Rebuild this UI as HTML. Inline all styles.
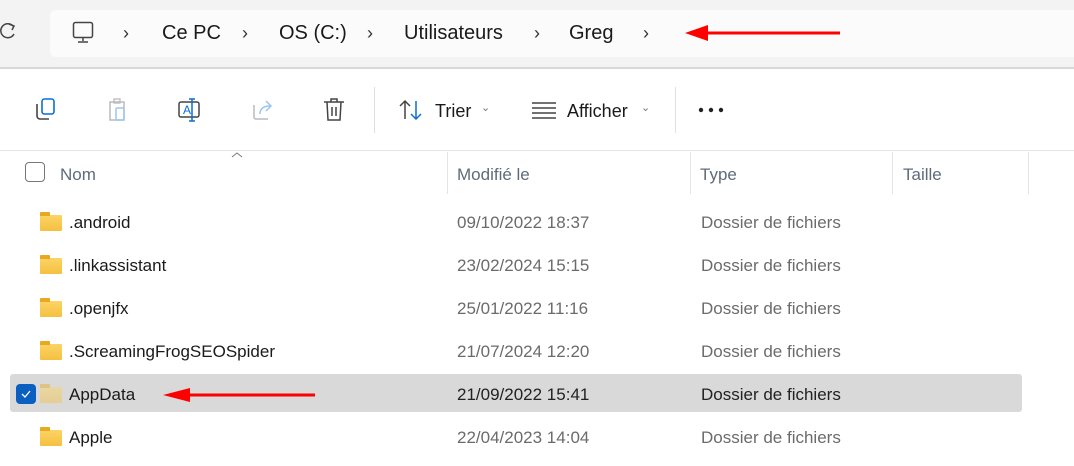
<!DOCTYPE html>
<html><head><meta charset="utf-8"><style>
body{margin:0;width:1074px;height:466px;overflow:hidden;background:#fff;font-family:"Liberation Sans",sans-serif;position:relative}
.top{position:absolute;left:0;top:0;width:1074px;height:67px;background:#f3f3f3;border-bottom:2px solid #d8d8d8}
.addr{position:absolute;left:50px;top:10px;width:1030px;height:47px;background:#fbfbfb;border-radius:6px}
.t{position:absolute;white-space:nowrap}
.bc{font-size:20px;color:#1a1a1a;top:22px}
.chev{font-size:18px;color:#333;top:23px}
.sep{position:absolute;width:1px;background:#e0e0e0;top:87px;height:46px}
.tb{font-size:17px;color:#1a1a1a;top:101px}
.hd{font-size:17px;color:#5f6b7a;top:165px}
.csep{position:absolute;top:152px;height:42px;width:1px;background:#e5e5e5}
.row{font-size:17px;color:#1a1a1a}
.dt{font-size:17px;color:#6b6b6b}
.fold{position:absolute;width:22px;height:16px;background:linear-gradient(#fcd465,#f5c040);border-radius:1px}
.fold:before{content:"";position:absolute;left:0;top:-3px;width:10px;height:4px;background:#e8a820;border-radius:1px 1px 0 0}
</style></head><body>
<div class="top"></div>
<div class="addr"></div>
<svg style="position:absolute;left:0;top:22px" width="16" height="22"><path d="M13 4 A7 7 0 1 0 14 12" fill="none" stroke="#444" stroke-width="1.5"/><path d="M9 2 L14 4 L12 8" fill="none" stroke="#444" stroke-width="1.5"/></svg>
<svg style="position:absolute;left:72px;top:21px" width="24" height="24"><rect x="1.5" y="1.5" width="19" height="15" rx="2" fill="none" stroke="#444" stroke-width="1.5"/><path d="M11 17v3M6 21h10" stroke="#444" stroke-width="1.5"/></svg>
<div class="t chev" style="left:123px">›</div>
<div class="t bc" style="left:162px">Ce PC</div>
<div class="t chev" style="left:242px">›</div>
<div class="t bc" style="left:279px">OS (C:)</div>
<div class="t chev" style="left:367px">›</div>
<div class="t bc" style="left:404px">Utilisateurs</div>
<div class="t chev" style="left:534px">›</div>
<div class="t bc" style="left:569px">Greg</div>
<div class="t chev" style="left:643px">›</div>
<svg style="position:absolute;left:680px;top:22px" width="165" height="22"><path d="M160 11 H20" stroke="#f00" stroke-width="3"/><path d="M5 11 L28 3 L28 19Z" fill="#f00"/></svg>

<svg style="position:absolute;left:33px;top:97px" width="26" height="26"><rect x="9" y="2" width="12" height="15" rx="2.5" fill="none" stroke="#0a6fd0" stroke-width="1.6"/><path d="M4 7v12a3 3 0 0 0 3 3h9" fill="none" stroke="#444" stroke-width="1.6"/></svg>
<svg style="position:absolute;left:106px;top:97px" width="24" height="26"><path d="M4 5h14v18H4z" fill="none" stroke="#bbb" stroke-width="1.5"/><rect x="8" y="2" width="6" height="4" fill="none" stroke="#bbb" stroke-width="1.3"/><rect x="10" y="11" width="8" height="12" rx="1" fill="none" stroke="#9cc6ee" stroke-width="1.5"/></svg>
<svg style="position:absolute;left:177px;top:97px" width="26" height="26"><rect x="2" y="5" width="20" height="15" rx="2" fill="none" stroke="#444" stroke-width="1.5"/><text x="6" y="17" font-size="12" fill="#0a6fd0" font-family="Liberation Sans">A</text><path d="M15 2v22M12 2h6M12 24h6" stroke="#0a6fd0" stroke-width="1.5"/></svg>
<svg style="position:absolute;left:250px;top:97px" width="26" height="26"><path d="M4 8v12a2 2 0 0 0 2 2h12" fill="none" stroke="#bbb" stroke-width="1.5"/><path d="M10 17c0-6 4-8 10-8M16 4l5 5-5 5" fill="none" stroke="#9cc6ee" stroke-width="1.5"/></svg>
<svg style="position:absolute;left:322px;top:97px" width="24" height="26"><path d="M2 5h20M9 5V2h6v3M5 5l1 18h12l1-18M10 10v9M14 10v9" fill="none" stroke="#444" stroke-width="1.5"/></svg>
<div class="sep" style="left:374px"></div>
<svg style="position:absolute;left:398px;top:98px" width="28" height="24"><path d="M7 21V3M2 8l5-5 5 5" fill="none" stroke="#444" stroke-width="1.5"/><path d="M18 3v18M13 16l5 5 5-5" fill="none" stroke="#0a6fd0" stroke-width="1.5"/></svg>
<div class="t tb" style="left:435px;font-size:18px">Trier</div>
<div class="t" style="left:481px;top:101px;font-size:11px;color:#777">⌄</div>
<svg style="position:absolute;left:531px;top:101px" width="26" height="18"><path d="M1 2h24M1 7h24M1 12h24M1 17h24" stroke="#444" stroke-width="1.5"/></svg>
<div class="t tb" style="left:567px;font-size:18px">Afficher</div>
<div class="t" style="left:641px;top:101px;font-size:11px;color:#777">⌄</div>
<div class="sep" style="left:675px"></div>
<svg style="position:absolute;left:698px;top:107px" width="28" height="6"><circle cx="3" cy="3" r="2.2" fill="#222"/><circle cx="13" cy="3" r="2.2" fill="#222"/><circle cx="23" cy="3" r="2.2" fill="#222"/></svg>

<div style="position:absolute;left:0;top:150px;width:1074px;height:1px;background:#e5e5e5"></div>
<svg style="position:absolute;left:230px;top:151px" width="14" height="8"><path d="M2 6l5-4 5 4" fill="none" stroke="#777" stroke-width="1"/></svg>
<div style="position:absolute;left:25px;top:162px;width:20px;height:20px;border:1.5px solid #777;border-radius:4px;box-sizing:border-box"></div>
<div class="t hd" style="left:60px">Nom</div>
<div class="csep" style="left:447px"></div><div class="t hd" style="left:457px">Modifié le</div>
<div class="csep" style="left:690px"></div><div class="t hd" style="left:700px">Type</div>
<div class="csep" style="left:892px"></div><div class="t hd" style="left:903px">Taille</div>
<div class="csep" style="left:1028px"></div>

<div style="position:absolute;left:10px;top:374px;width:1012px;height:38px;background:#d9d9d9;border-radius:3px"></div>
<div style="position:absolute;left:16px;top:384px;width:20px;height:20px;background:#0a5fc0;border-radius:4px"></div>
<svg style="position:absolute;left:16px;top:384px" width="20" height="20"><path d="M6 10l3 3 5-6" fill="none" stroke="#fff" stroke-width="1.3"/></svg>

<div class="fold" style="left:40px;top:215px"></div><div class="t row" style="left:69px;top:213px">.android</div><div class="t dt" style="left:457px;top:213px">09/10/2022 18:37</div><div class="t dt" style="left:701px;top:213px">Dossier de fichiers</div>
<div class="fold" style="left:40px;top:258px"></div><div class="t row" style="left:69px;top:256px">.linkassistant</div><div class="t dt" style="left:457px;top:256px">23/02/2024 15:15</div><div class="t dt" style="left:701px;top:256px">Dossier de fichiers</div>
<div class="fold" style="left:40px;top:301px"></div><div class="t row" style="left:69px;top:299px">.openjfx</div><div class="t dt" style="left:457px;top:299px">25/01/2022 11:16</div><div class="t dt" style="left:701px;top:299px">Dossier de fichiers</div>
<div class="fold" style="left:40px;top:344px"></div><div class="t row" style="left:69px;top:342px">.ScreamingFrogSEOSpider</div><div class="t dt" style="left:457px;top:342px">21/07/2024 12:20</div><div class="t dt" style="left:701px;top:342px">Dossier de fichiers</div>
<div class="fold" style="left:40px;top:387px;opacity:.45"></div><div class="t row" style="left:69px;top:385px">AppData</div><div class="t" style="left:457px;top:385px;font-size:17px;color:#222">21/09/2022 15:41</div><div class="t" style="left:701px;top:385px;font-size:17px;color:#222">Dossier de fichiers</div>
<svg style="position:absolute;left:158px;top:385px" width="160" height="20"><path d="M157 10 H25" stroke="#f00" stroke-width="3"/><path d="M5 10 L32 3 L32 17Z" fill="#f00"/></svg>
<div class="fold" style="left:40px;top:430px"></div><div class="t row" style="left:69px;top:428px">Apple</div><div class="t dt" style="left:457px;top:428px">22/04/2023 14:04</div><div class="t dt" style="left:701px;top:428px">Dossier de fichiers</div>
</body></html>
